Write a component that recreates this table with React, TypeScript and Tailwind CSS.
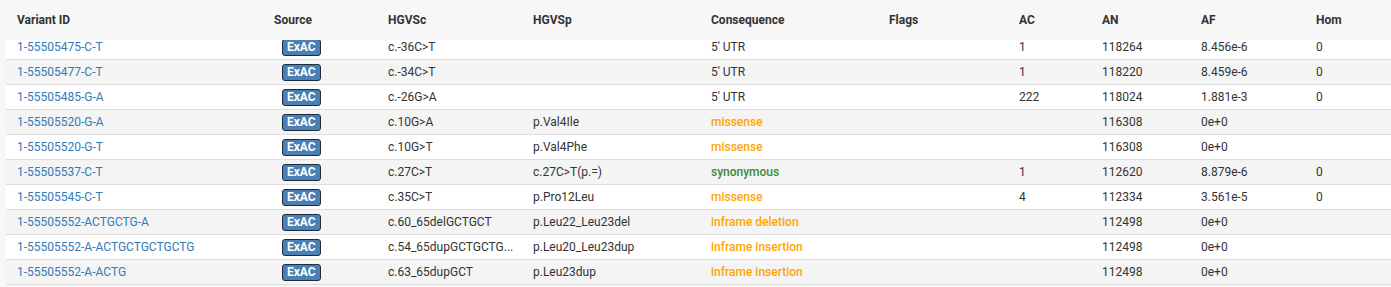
type Variant = {
  id: string
  hgvsc: string
  hgvsp: string
  consequence: string
  ac: string
  an: string
  af: string
  hom: string
}

const variants: Variant[] = [
  { id: "1-55505475-C-T", hgvsc: "c.-36C>T", hgvsp: "", consequence: "5' UTR", ac: "1", an: "118264", af: "8.456e-6", hom: "0" },
  { id: "1-55505477-C-T", hgvsc: "c.-34C>T", hgvsp: "", consequence: "5' UTR", ac: "1", an: "118220", af: "8.459e-6", hom: "0" },
  { id: "1-55505485-G-A", hgvsc: "c.-26G>A", hgvsp: "", consequence: "5' UTR", ac: "222", an: "118024", af: "1.881e-3", hom: "0" },
  { id: "1-55505520-G-A", hgvsc: "c.10G>A", hgvsp: "p.Val4Ile", consequence: "missense", ac: "", an: "116308", af: "0e+0", hom: "" },
  { id: "1-55505520-G-T", hgvsc: "c.10G>T", hgvsp: "p.Val4Phe", consequence: "missense", ac: "", an: "116308", af: "0e+0", hom: "" },
  { id: "1-55505537-C-T", hgvsc: "c.27C>T", hgvsp: "c.27C>T(p.=)", consequence: "synonymous", ac: "1", an: "112620", af: "8.879e-6", hom: "0" },
  { id: "1-55505545-C-T", hgvsc: "c.35C>T", hgvsp: "p.Pro12Leu", consequence: "missense", ac: "4", an: "112334", af: "3.561e-5", hom: "0" },
  { id: "1-55505552-ACTGCTG-A", hgvsc: "c.60_65delGCTGCT", hgvsp: "p.Leu22_Leu23del", consequence: "inframe deletion", ac: "", an: "112498", af: "0e+0", hom: "" },
  // long HGVSc is shortened in the table
  { id: "1-55505552-A-ACTGCTGCTGCTG", hgvsc: "c.54_65dupGCTGCTG...", hgvsp: "p.Leu20_Leu23dup", consequence: "inframe insertion", ac: "", an: "112498", af: "0e+0", hom: "" },
  { id: "1-55505552-A-ACTG", hgvsc: "c.63_65dupGCT", hgvsp: "p.Leu23dup", consequence: "inframe insertion", ac: "", an: "112498", af: "0e+0", hom: "" },
]

const cols = "grid grid-cols-[268px_114px_145px_178px_178px_130px_83px_99px_115px_74px]"

function consequenceClass(c: string) {
  if (c === "synonymous") return "text-[#3a8a3a] font-medium"
  if (c === "5' UTR") return "text-[#333]"
  return "text-[#ffa500] font-medium"
}

export default function App() {
  return (
    <div className="w-[1391px] h-[287px] overflow-hidden bg-[#f7f7f7] text-[12px] text-[#333] font-['Roboto','Liberation_Sans',sans-serif]">
      <div className={`${cols} ml-[6px] h-[40px] items-center font-bold`}>
        <div className="pl-[11px]">Variant ID</div>
        <div>Source</div>
        <div>HGVSc</div>
        <div>HGVSp</div>
        <div>Consequence</div>
        <div>Flags</div>
        <div>AC</div>
        <div>AN</div>
        <div>AF</div>
        <div>Hom</div>
      </div>
      <div className="h-[247px] overflow-hidden">
        <div className="-mt-[5px] ml-[6px]">
          {variants.map((v, i) => (
            <div
              key={v.id}
              className={`${cols} h-[25px] items-center border-b border-[#dedede] ${i % 2 === 0 ? "bg-white" : "bg-[#f4f4f4]"}`}
            >
              <div className="pl-[11px] text-[#337ab7] whitespace-nowrap">{v.id}</div>
              <div className="pl-[8px]">
                <span className="inline-flex h-[17px] items-center rounded-[3px] border border-[#1f2d3a] bg-[#4a80b6] px-[4px] font-bold text-white leading-none">
                  ExAC
                </span>
              </div>
              <div className="whitespace-nowrap">{v.hgvsc}</div>
              <div className="whitespace-nowrap">{v.hgvsp}</div>
              <div className={`whitespace-nowrap ${consequenceClass(v.consequence)}`}>{v.consequence}</div>
              <div></div>
              <div>{v.ac}</div>
              <div>{v.an}</div>
              <div>{v.af}</div>
              <div>{v.hom}</div>
            </div>
          ))}
        </div>
      </div>
    </div>
  )
}
